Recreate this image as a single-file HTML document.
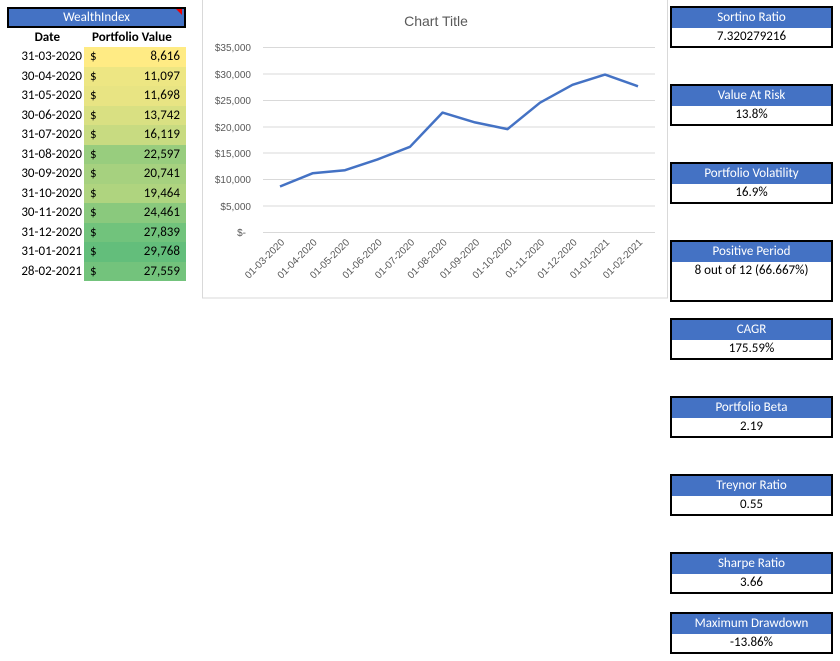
<!DOCTYPE html>
<html><head><meta charset="utf-8"><style>
body{margin:0;width:840px;height:661px;background:#fff;font-family:Calibri,"Liberation Sans",sans-serif;position:relative;overflow:hidden;font-size:13px;color:#000}
.a{position:absolute}
.hdr{left:7px;top:7px;width:175px;height:17px;background:#4472c4;border:2px solid #000;color:#fff;text-align:center;line-height:17px;font-size:13px}
.row{position:absolute;left:0;height:19.5px;line-height:19.5px;width:190px}
.d{position:absolute;left:0;width:82px;text-align:right}
.v{position:absolute;left:84px;width:102px;height:19.5px}
.v span.s{position:absolute;left:6px}
.v span.n{position:absolute;right:6px}
.box{position:absolute;left:670px;width:159px;border:2px solid #000}
.box .h{background:#4472c4;color:#fff;text-align:center;height:20px;line-height:20px}
.box .b{background:#fff;text-align:center;height:18px;line-height:17px}
</style></head><body>
<div class="a hdr">WealthIndex</div>
<div class="a" style="left:176px;top:9px;width:0;height:0;border-left:6px solid transparent;border-top:6px solid #e00"></div>
<div class="row" style="top:28px;font-weight:bold"><div class="d" style="width:60px">Date</div><div style="position:absolute;left:92px">Portfolio Value</div></div>
<div class="row" style="top:47px"><div class="d">31-03-2020</div><div class="v" style="background:rgb(255,235,132)"><span class="s">$</span><span class="n">8,616</span></div></div>
<div class="row" style="top:66.5px"><div class="d">30-04-2020</div><div class="v" style="background:rgb(237,230,131)"><span class="s">$</span><span class="n">11,097</span></div></div>
<div class="row" style="top:86px"><div class="d">31-05-2020</div><div class="v" style="background:rgb(232,228,131)"><span class="s">$</span><span class="n">11,698</span></div></div>
<div class="row" style="top:105.5px"><div class="d">30-06-2020</div><div class="v" style="background:rgb(217,224,130)"><span class="s">$</span><span class="n">13,742</span></div></div>
<div class="row" style="top:125px"><div class="d">31-07-2020</div><div class="v" style="background:rgb(200,219,129)"><span class="s">$</span><span class="n">16,119</span></div></div>
<div class="row" style="top:144.5px"><div class="d">31-08-2020</div><div class="v" style="background:rgb(152,205,126)"><span class="s">$</span><span class="n">22,597</span></div></div>
<div class="row" style="top:164px"><div class="d">30-09-2020</div><div class="v" style="background:rgb(166,209,127)"><span class="s">$</span><span class="n">20,741</span></div></div>
<div class="row" style="top:183.5px"><div class="d">31-10-2020</div><div class="v" style="background:rgb(175,212,127)"><span class="s">$</span><span class="n">19,464</span></div></div>
<div class="row" style="top:203px"><div class="d">30-11-2020</div><div class="v" style="background:rgb(138,201,125)"><span class="s">$</span><span class="n">24,461</span></div></div>
<div class="row" style="top:222.5px"><div class="d">31-12-2020</div><div class="v" style="background:rgb(113,195,124)"><span class="s">$</span><span class="n">27,839</span></div></div>
<div class="row" style="top:242px"><div class="d">31-01-2021</div><div class="v" style="background:rgb(99,190,123)"><span class="s">$</span><span class="n">29,768</span></div></div>
<div class="row" style="top:261.5px"><div class="d">28-02-2021</div><div class="v" style="background:rgb(115,195,124)"><span class="s">$</span><span class="n">27,559</span></div></div>

<svg class="a" style="left:0;top:0" width="670" height="300">
<rect x="202.5" y="-1" width="465" height="299" fill="#fff" stroke="#d9d9d9"/>
<text x="436" y="26" text-anchor="middle" font-family="Liberation Sans,sans-serif" font-size="14" fill="#595959">Chart Title</text>
<g stroke="#d9d9d9" stroke-width="1">
<line x1="263" x2="655" y1="47.5" y2="47.5"/><line x1="263" x2="655" y1="74" y2="74"/><line x1="263" x2="655" y1="100.5" y2="100.5"/><line x1="263" x2="655" y1="127" y2="127"/><line x1="263" x2="655" y1="153" y2="153"/><line x1="263" x2="655" y1="179.5" y2="179.5"/><line x1="263" x2="655" y1="206" y2="206"/><line x1="263" x2="655" y1="232.5" y2="232.5"/>
</g>
<g font-family="Liberation Sans,sans-serif" font-size="10" fill="#595959" text-anchor="end">
<text x="251" y="51">$35,000</text><text x="251" y="78">$30,000</text><text x="251" y="104">$25,000</text><text x="251" y="131">$20,000</text><text x="251" y="157">$15,000</text><text x="251" y="183">$10,000</text><text x="251" y="210">$5,000</text><text x="246" y="236">$-</text>
</g>
<polyline fill="none" stroke="#4472c4" stroke-width="2.5" stroke-linejoin="round" points="280,186.5 312.5,173.3 345,170.2 377.5,159.4 410,146.8 442.5,112.6 475,122.4 507.5,129.1 540,102.7 572.5,84.8 605,74.6 638,86.3"/>
<g font-family="Liberation Sans,sans-serif" font-size="10" fill="#595959" text-anchor="end">
<text transform="translate(285,243) rotate(-45)">01-03-2020</text>
<text transform="translate(317.5,243) rotate(-45)">01-04-2020</text>
<text transform="translate(350,243) rotate(-45)">01-05-2020</text>
<text transform="translate(382.5,243) rotate(-45)">01-06-2020</text>
<text transform="translate(415,243) rotate(-45)">01-07-2020</text>
<text transform="translate(447.5,243) rotate(-45)">01-08-2020</text>
<text transform="translate(480,243) rotate(-45)">01-09-2020</text>
<text transform="translate(512.5,243) rotate(-45)">01-10-2020</text>
<text transform="translate(545,243) rotate(-45)">01-11-2020</text>
<text transform="translate(577.5,243) rotate(-45)">01-12-2020</text>
<text transform="translate(610,243) rotate(-45)">01-01-2021</text>
<text transform="translate(643,243) rotate(-45)">01-02-2021</text>
</g>
</svg>

<div class="box" style="top:6px"><div class="h">Sortino Ratio</div><div class="b">7.320279216</div></div>
<div class="box" style="top:84px"><div class="h">Value At Risk</div><div class="b">13.8%</div></div>
<div class="box" style="top:162px"><div class="h">Portfolio Volatility</div><div class="b">16.9%</div></div>
<div class="box" style="top:240px"><div class="h">Positive Period</div><div class="b" style="height:38px">8 out of 12 (66.667%)</div></div>
<div class="box" style="top:318px"><div class="h">CAGR</div><div class="b">175.59%</div></div>
<div class="box" style="top:396px"><div class="h">Portfolio Beta</div><div class="b">2.19</div></div>
<div class="box" style="top:474px"><div class="h">Treynor Ratio</div><div class="b">0.55</div></div>
<div class="box" style="top:552px"><div class="h">Sharpe Ratio</div><div class="b">3.66</div></div>
<div class="box" style="top:612px"><div class="h">Maximum Drawdown</div><div class="b">-13.86%</div></div>
</body></html>
